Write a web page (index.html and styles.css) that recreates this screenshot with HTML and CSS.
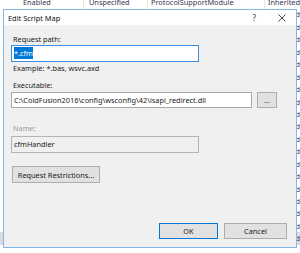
FILE: index.html
```html
<!DOCTYPE html>
<html>
<head>
<meta charset="utf-8">
<link rel="stylesheet" href="styles.css">
</head>
<body>
<div class="list">
  <div class="row"><span>Enabled</span><span>Unspecified</span><span>ProtocolSupportModule</span><span>Inherited</span></div>
  <div class="row"><span></span><span></span><span></span><span>Inherited</span></div>
  <div class="row"><span></span><span></span><span></span><span>Inherited</span></div>
  <div class="row"><span></span><span></span><span></span><span>Inherited</span></div>
  <div class="row"><span></span><span></span><span></span><span>Inherited</span></div>
  <div class="row"><span></span><span></span><span></span><span>Inherited</span></div>
  <div class="row"><span></span><span></span><span></span><span>Inherited</span></div>
  <div class="row"><span></span><span></span><span></span><span>Inherited</span></div>
  <div class="row"><span></span><span></span><span></span><span>Inherited</span></div>
  <div class="row"><span></span><span></span><span></span><span>Inherited</span></div>
  <div class="row"><span></span><span></span><span></span><span>Inherited</span></div>
  <div class="row"><span></span><span></span><span></span><span>Inherited</span></div>
  <div class="row"><span></span><span></span><span></span><span>Inherited</span></div>
  <div class="row"><span></span><span></span><span></span><span>Inherited</span></div>
  <div class="row"><span></span><span></span><span></span><span>Inherited</span></div>
  <div class="row"><span></span><span></span><span></span><span>Inherited</span></div>
  <div class="row"><span></span><span></span><span></span><span>Inherited</span></div>
  <div class="row"><span></span><span></span><span></span><span>Inherited</span></div>
  <div class="row"><span></span><span></span><span></span><span>Inherited</span></div>
  <div class="row selected"><span>Enabled</span><span>File or Folder</span><span>IsapiModule</span><span>Inherited</span></div>
</div>

<div class="dialog">
  <div class="titlebar">
    <span class="title">Edit Script Map</span>
    <span class="help">?</span>
    <svg class="close" width="8" height="8" viewBox="0 0 8 8"><path d="M0.5 0.5 L7.5 7.5 M7.5 0.5 L0.5 7.5" stroke="#333" stroke-width="0.9" fill="none"/></svg>
  </div>
  <div class="content">
    <div class="label l1">Request path:</div>
    <div class="field focused"><span class="sel">*.cfm</span></div>
    <div class="label example">Example: *.bas, wsvc.axd</div>
    <div class="label l2">Executable:</div>
    <div class="exe-row">
      <div class="field exe">C:\ColdFusion2016\config\wsconfig\42\isapi_redirect.dll</div>
      <div class="btn browse">...</div>
    </div>
    <div class="label l3 disabled">Name:</div>
    <div class="field readonly">cfmHandler</div>
    <div class="btn restrict">Request Restrictions...</div>
    <div class="actions">
      <div class="btn ok">OK</div>
      <div class="btn cancel">Cancel</div>
    </div>
  </div>
</div>
</body>
</html>
```

FILE: styles.css
```css
html, body {
  margin: 0;
  padding: 0;
  width: 300px;
  height: 253px;
  overflow: hidden;
  background: #ffffff;
  font-family: "Noto Sans", "Liberation Sans", sans-serif;
  font-size: 7.35px;
  color: #1a1a1a;
}

.list {
  margin-top: -4px;
}

.row {
  display: grid;
  grid-template-columns: 83px 64px 117px 36px;
  height: 12.45px;
  line-height: 12.45px;
  color: #3a3552;
  white-space: nowrap;
  overflow: hidden;
}

.row span {
  overflow: hidden;
}

.row span:nth-child(1) { padding-left: 23px; }
.row span:nth-child(2) { padding-left: 5px; border-left: 1px solid #e6e6e6; }
.row span:nth-child(3) { padding-left: 3px; border-left: 1px solid #e6e6e6; }
.row span:nth-child(4) { padding-left: 3px; border-left: 1px solid #e6e6e6; }

.row.selected {
  background: #dadada;
}

.dialog {
  position: absolute;
  left: 3px;
  top: 9px;
  width: 292px;
  height: 237px;
  border: 1px solid #80b9ea;
  background: #f0f0f0;
  display: flex;
  flex-direction: column;
}

.titlebar {
  height: 15px;
  background: #ffffff;
  display: flex;
  align-items: center;
  padding-left: 4px;
}

.title {
  flex: 1;
  font-size: 7.4px;
  color: #111;
}

.help {
  font-size: 8px;
  color: #333;
  margin-right: 22px;
}

.close {
  margin-right: 10px;
}

.content {
  flex: 1;
  display: flex;
  flex-direction: column;
  padding: 9px 9px 8px 7px;
}

.label {
  height: 11px;
  line-height: 11px;
  padding-left: 2px;
  white-space: nowrap;
}

.example { margin-top: 1px; }
.l2 { margin-top: 6px; }
.l3 { margin-top: 15px; }
.disabled { color: #9a9a9a; }

.field {
  box-sizing: border-box;
  width: 188px;
  height: 17px;
  line-height: 15px;
  border: 1px solid #a9a9a9;
  background: #ffffff;
  padding-left: 2px;
  white-space: nowrap;
  overflow: hidden;
}

.field.focused {
  border-color: #3c8fdc;
}

.sel {
  background: #0078d7;
  color: #ffffff;
  padding: 1px 0;
}

.exe-row {
  display: flex;
  margin-top: 1px;
  gap: 5px;
}

.field.exe {
  width: 241px;
  height: 16px;
  line-height: 14px;
}

.field.readonly {
  margin-top: 2px;
  background: #f0f0f0;
  border-color: #b4b4b4;
}

.btn {
  box-sizing: border-box;
  background: #e1e1e1;
  border: 1px solid #adadad;
  display: flex;
  align-items: center;
  justify-content: center;
  color: #1a1a1a;
  white-space: nowrap;
}

.browse {
  width: 20px;
  height: 16px;
  color: #444;
}

.restrict {
  margin-top: 13px;
  margin-left: 1px;
  width: 88px;
  height: 17px;
}

.actions {
  margin-top: auto;
  display: flex;
  justify-content: flex-end;
  gap: 6px;
}

.ok {
  width: 59px;
  height: 16px;
  border-color: #0078d7;
}

.cancel {
  width: 63px;
  height: 16px;
}
```
